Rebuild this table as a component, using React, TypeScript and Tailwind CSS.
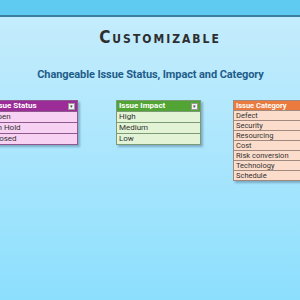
const statusRows = ["Open", "On Hold", "Closed"];
const impactRows = ["High", "Medium", "Low"];
const categoryRows = [
  "Defect",
  "Security",
  "Resourcing",
  "Cost",
  "Risk conversion",
  "Technology",
  "Schedule",
];

type ListProps = {
  title: string;
  rows: string[];
  head: string;
  cell: string;
  line: string;
  width: string;
  headH: string;
  rowH: string;
  size: string;
};

const DropList = ({ title, rows, head, cell, line, width, headH, rowH, size }: ListProps) => {
  return (
    <div className={`${width} shrink-0 border ${line} shadow-[2px_2px_2px_rgba(40,70,100,0.35)]`}>
      <div className={`flex ${headH} items-center justify-between pl-[2px] pr-[2px] ${head}`}>
        <span className={`${size} font-bold leading-none text-white`}>{title}</span>
        <span className="flex h-[7px] w-[7px] items-center justify-center border border-[#9a9a9a] bg-[#f4f4f4] text-[5px] leading-none text-[#444]">
          ▾
        </span>
      </div>
      {rows.map((r) => (
        <div
          key={r}
          className={`flex ${rowH} items-center border-t ${line} pl-[2px] ${size} leading-none text-[#333] ${cell}`}
        >
          {r}
        </div>
      ))}
    </div>
  );
};

const App = () => {
  return (
    <div className="flex h-[300px] w-[300px] flex-col overflow-hidden bg-gradient-to-b from-[#c7edfc] to-[#8cdffd] font-['Roboto',sans-serif]">
      <div className="h-[17px] shrink-0 border-b-2 border-[#3d7ea3] bg-[#5fcbf1]" />
      <h1 className="mt-[12px] pl-[20px] text-center font-['DejaVu_Sans_Condensed',sans-serif] text-[17px] font-bold leading-none tracking-[2px] text-[#2e2e2e] [font-variant:small-caps]">
        Customizable
      </h1>
      <p className="mt-[23px] pl-[1px] text-center text-[11px] font-bold leading-none tracking-[-0.1px] text-[#1f5d8a]">
        Changeable Issue Status, Impact and Category
      </p>
      <div className="mt-[20px] flex items-start">
        <div className="ml-[-11px]">
          <DropList
            title="Issue Status"
            rows={statusRows}
            head="bg-[#9b2c98]"
            cell="bg-[#f7d2f3]"
            line="border-[#8e5a8e]"
            width="w-[89px]"
            headH="h-[10px]"
            rowH="h-[11px]"
            size="text-[8px]"
          />
        </div>
        <div className="ml-[38px]">
          <DropList
            title="Issue Impact"
            rows={impactRows}
            head="bg-[#52a535]"
            cell="bg-[#e2f4d5]"
            line="border-[#7d9a76]"
            width="w-[85px]"
            headH="h-[10px]"
            rowH="h-[11px]"
            size="text-[8px]"
          />
        </div>
        <div className="ml-[32px]">
          <DropList
            title="Issue Category"
            rows={categoryRows}
            head="bg-[#ea7a3e]"
            cell="bg-[#fcdccb]"
            line="border-[#a08a80]"
            width="w-[85px]"
            headH="h-[9px]"
            rowH="h-[10px]"
            size="text-[7.5px]"
          />
        </div>
      </div>
    </div>
  );
};

export default App;
